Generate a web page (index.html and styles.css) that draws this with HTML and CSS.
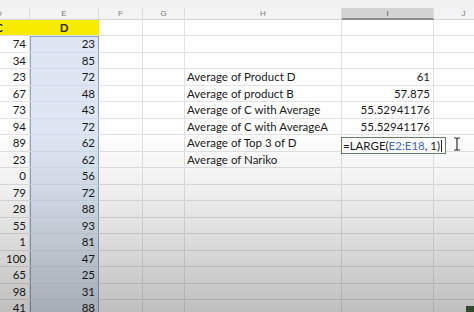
FILE: index.html
```html
<!DOCTYPE html>
<html>
<head>
<meta charset="utf-8">
<link rel="stylesheet" href="styles.css">
</head>
<body>
<div class="screen">
  <div class="topstrip"></div>
  <div class="sheet">
    <div class="row hdr">
      <div class="c w-d">D</div><div class="c w-e">E</div><div class="c w-f">F</div><div class="c w-g">G</div><div class="c w-h">H</div><div class="c w-i hsel">I</div><div class="c w-j">J</div>
    </div>
    <div class="row r1">
      <div class="c w-d yel">C</div><div class="c w-e yel">D</div><div class="c w-f"></div><div class="c w-g"></div><div class="c w-h"></div><div class="c w-i"></div><div class="c w-j"></div>
    </div>
    <div class="row"><div class="c w-d num">74</div><div class="c w-e num sel top">23</div><div class="c w-f"></div><div class="c w-g"></div><div class="c w-h"></div><div class="c w-i"></div><div class="c w-j"></div></div>
    <div class="row"><div class="c w-d num">34</div><div class="c w-e num sel">85</div><div class="c w-f"></div><div class="c w-g"></div><div class="c w-h"></div><div class="c w-i"></div><div class="c w-j"></div></div>
    <div class="row"><div class="c w-d num">23</div><div class="c w-e num sel">72</div><div class="c w-f"></div><div class="c w-g"></div><div class="c w-h txt">Average of Product D</div><div class="c w-i num">61</div><div class="c w-j"></div></div>
    <div class="row"><div class="c w-d num">67</div><div class="c w-e num sel">48</div><div class="c w-f"></div><div class="c w-g"></div><div class="c w-h txt">Average of product B</div><div class="c w-i num">57.875</div><div class="c w-j"></div></div>
    <div class="row"><div class="c w-d num">73</div><div class="c w-e num sel">43</div><div class="c w-f"></div><div class="c w-g"></div><div class="c w-h txt">Average of C with Average</div><div class="c w-i num">55.52941176</div><div class="c w-j"></div></div>
    <div class="row"><div class="c w-d num">94</div><div class="c w-e num sel">72</div><div class="c w-f"></div><div class="c w-g"></div><div class="c w-h txt">Average of C with AverageA</div><div class="c w-i num">55.52941176</div><div class="c w-j"></div></div>
    <div class="row"><div class="c w-d num">89</div><div class="c w-e num sel">62</div><div class="c w-f"></div><div class="c w-g"></div><div class="c w-h txt">Average of Top 3 of D</div><div class="c w-i edit-host"><div class="editor">=LARGE(<span class="ref">E2:E18</span>, 1)<span class="caret"></span></div></div><div class="c w-j"></div></div>
    <div class="row"><div class="c w-d num">23</div><div class="c w-e num sel">62</div><div class="c w-f"></div><div class="c w-g"></div><div class="c w-h txt">Average of Nariko</div><div class="c w-i"></div><div class="c w-j"></div></div>
    <div class="row"><div class="c w-d num">0</div><div class="c w-e num sel">56</div><div class="c w-f"></div><div class="c w-g"></div><div class="c w-h"></div><div class="c w-i"></div><div class="c w-j"></div></div>
    <div class="row"><div class="c w-d num">79</div><div class="c w-e num sel">72</div><div class="c w-f"></div><div class="c w-g"></div><div class="c w-h"></div><div class="c w-i"></div><div class="c w-j"></div></div>
    <div class="row"><div class="c w-d num">28</div><div class="c w-e num sel">88</div><div class="c w-f"></div><div class="c w-g"></div><div class="c w-h"></div><div class="c w-i"></div><div class="c w-j"></div></div>
    <div class="row"><div class="c w-d num">55</div><div class="c w-e num sel">93</div><div class="c w-f"></div><div class="c w-g"></div><div class="c w-h"></div><div class="c w-i"></div><div class="c w-j"></div></div>
    <div class="row"><div class="c w-d num">1</div><div class="c w-e num sel">81</div><div class="c w-f"></div><div class="c w-g"></div><div class="c w-h"></div><div class="c w-i"></div><div class="c w-j"></div></div>
    <div class="row"><div class="c w-d num">100</div><div class="c w-e num sel">47</div><div class="c w-f"></div><div class="c w-g"></div><div class="c w-h"></div><div class="c w-i"></div><div class="c w-j"></div></div>
    <div class="row"><div class="c w-d num">65</div><div class="c w-e num sel">25</div><div class="c w-f"></div><div class="c w-g"></div><div class="c w-h"></div><div class="c w-i"></div><div class="c w-j"></div></div>
    <div class="row"><div class="c w-d num">98</div><div class="c w-e num sel">31</div><div class="c w-f"></div><div class="c w-g"></div><div class="c w-h"></div><div class="c w-i"></div><div class="c w-j"></div></div>
    <div class="row"><div class="c w-d num">41</div><div class="c w-e num sel">88</div><div class="c w-f"></div><div class="c w-g"></div><div class="c w-h"></div><div class="c w-i"></div><div class="c w-j"></div></div>
  </div>
  <svg class="ibeam" width="10" height="14" viewBox="0 0 10 14"><path d="M2 1 H4 M6 1 H8 M5 1.5 V12.5 M2 13 H4 M6 13 H8 M4 1 Q5 1 5 2 Q5 1 6 1 M4 13 Q5 13 5 12 Q5 13 6 13" fill="none" stroke="#333" stroke-width="1.2"/></svg>
  <div class="shade"></div>
  <div class="corner"></div>
</div>
</body>
</html>
```

FILE: styles.css
```css
html, body {
  margin: 0;
  padding: 0;
  background: #ffffff;
}
.screen {
  position: relative;
  width: 474px;
  height: 312px;
  overflow: hidden;
  font-family: Lato, "Liberation Sans", sans-serif;
  color: #1a1a1a;
}
.topstrip {
  height: 8px;
  background: #f1f1f1;
}
.sheet {
  margin-left: -31px;
  display: flex;
  flex-direction: column;
}
.row {
  display: flex;
  height: 16.5px;
}
.row.hdr {
  height: 12px;
  background: #f3f3f3;
}
.row.r1 {
  height: 16px;
}
.c {
  box-sizing: border-box;
  flex: none;
  border-right: 1px solid #e2e2e2;
  border-bottom: 1px solid #e2e2e2;
  font-size: 11.5px;
  line-height: 15px;
  white-space: nowrap;
}
.w-d { width: 61px; }
.w-e { width: 69px; }
.w-f { width: 44px; }
.w-g { width: 42px; }
.w-h { width: 157px; }
.w-i { width: 92px; }
.w-j { width: 60px; }
.hdr .c {
  font-family: "Liberation Sans", sans-serif;
  font-size: 8px;
  line-height: 11px;
  color: #7a7a7a;
  text-align: center;
  border-right: 1px solid #dcdcdc;
  border-bottom: 1px solid #d4d4d4;
}
.hdr .hsel {
  background: #d3d3d3;
  border-bottom: 2px solid #8e8e8e;
  color: #555;
}
.yel {
  background: #f7ec00;
  border-right-color: #f7ec00;
  text-align: center;
  font-weight: bold;
  color: #2a2a10;
  line-height: 16px;
}
.num {
  text-align: right;
  padding-right: 3px;
  line-height: 16px;
}
.txt {
  padding-left: 2px;
  line-height: 16px;
}
.sel {
  background: #dde6f2;
  border-bottom-color: #d3dcea;
  border-right: 1px solid #8aa6cc;
  box-shadow: inset 1px 0 0 #8aa6cc;
}
.sel.top {
  box-shadow: inset 1px 0 0 #8aa6cc, inset 0 1px 0 #8aa6cc;
}
.edit-host {
  position: relative;
}
.editor {
  position: absolute;
  left: -1px;
  top: 2px;
  height: 17px;
  box-sizing: border-box;
  padding: 0 3px 0 1px;
  border: 1px solid #6b7c6d;
  background: #fff;
  font-size: 11.5px;
  line-height: 15px;
  white-space: nowrap;
  display: flex;
  align-items: center;
}
.ref {
  color: #3f6fc2;
}
.caret {
  display: inline-block;
  width: 1px;
  height: 12px;
  background: #222;
  margin-left: 1px;
}
.ibeam {
  position: absolute;
  left: 452px;
  top: 137px;
}
.shade {
  position: absolute;
  inset: 0;
  pointer-events: none;
  background: linear-gradient(to bottom, rgba(0,0,0,0) 0%, rgba(0,0,0,0) 42%, rgba(0,0,0,0.06) 60%, rgba(0,0,0,0.16) 82%, rgba(0,0,0,0.25) 100%);
}
.corner {
  position: absolute;
  right: 0;
  bottom: 0;
  width: 8px;
  height: 6px;
  background: #2f4a2f;
}
```
